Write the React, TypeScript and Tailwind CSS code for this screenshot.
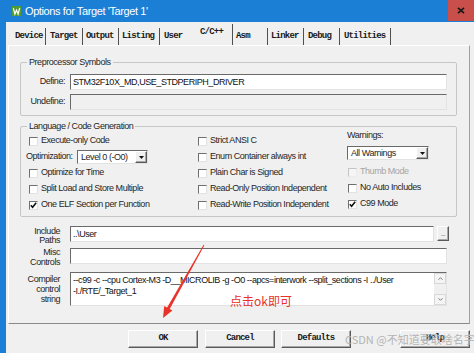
import React from "react";

const sans = "font-['Liberation_Sans',Arial,sans-serif]";
const mono = "font-['Liberation_Mono','Courier_New',monospace] font-bold text-[9px] tracking-[-0.8px] text-[#1a1a1a]";
const sunken =
  "border border-t-[#6a6a6a] border-l-[#6a6a6a] border-r-[#e3e3e3] border-b-[#e3e3e3]";
const raised =
  "border border-t-white border-l-white border-r-[#5a5a5a] border-b-[#5a5a5a] shadow-[inset_-1px_-1px_0_#a8a8a8]";

function Check({ checked = false, disabled = false }: { checked?: boolean; disabled?: boolean }) {
  return (
    <span
      className={`relative inline-block w-[9px] h-[9px] shrink-0 border ${
        disabled
          ? "border-t-[#c4c4c4] border-l-[#c4c4c4] border-r-[#ececec] border-b-[#ececec] bg-[#f5f5f5]"
          : "border-t-[#6f6f6f] border-l-[#6f6f6f] border-r-[#e2e2e2] border-b-[#e2e2e2] bg-white"
      }`}
    >
      {checked && (
        <svg className="absolute left-0 top-0" width="7" height="7" viewBox="0 0 7 7">
          <path d="M0.8 3.2 L2.6 5.2 L6.2 0.8" stroke="#111" strokeWidth="1.6" fill="none" />
        </svg>
      )}
    </span>
  );
}

function CbRow({ label, checked, disabled }: { label: string; checked?: boolean; disabled?: boolean }) {
  return (
    <div className="h-[16px] flex items-center">
      <Check checked={checked} disabled={disabled} />
      <span className={`ml-[3px] whitespace-nowrap ${disabled ? "text-[#a5a5a5]" : ""}`}>{label}</span>
    </div>
  );
}

function Select({ value, w }: { value: string; w: string }) {
  return (
    <div className={`flex items-stretch h-[14px] bg-white ${sunken} ${w}`}>
      <span className="flex-1 pl-[3px] leading-[12px] whitespace-nowrap">{value}</span>
      <span className={`w-[12px] flex items-center justify-center bg-[#f0f0f0] ${raised}`}>
        <svg width="5" height="3" viewBox="0 0 5 3">
          <path d="M0 0 H5 L2.5 3 Z" fill="#111" />
        </svg>
      </span>
    </div>
  );
}

function Tab({ label, w, pl, sep = true, sel = false }: { label: string; w: string; pl: string; sep?: boolean; sel?: boolean }) {
  return (
    <div
      className={`${w} ${pl} ${mono} flex items-center ${sel ? "h-[21px] pb-[3px]" : "h-[17px]"} ${
        sep ? "border-r border-r-[#505050]" : ""
      } whitespace-nowrap`}
    >
      {label}
    </div>
  );
}

function Btn({ label, cls }: { label: string; cls: string }) {
  return (
    <div className={`${cls} w-[70px] h-[18px] bg-[#f0f0f0] ${raised} flex items-center justify-center ${mono}`}>
      {label}
    </div>
  );
}

export default function App() {
  return (
    <div className={`relative w-[474px] h-[353px] overflow-hidden bg-[#f0f0f0] text-[9px] tracking-[-0.45px] text-[#262626] ${sans}`}>
      {/* Title bar */}
      <div className="h-[22px] bg-[#1b7fd5] flex items-center">
        <svg className="ml-[12px]" width="9" height="10" viewBox="0 0 9 10">
          <rect width="9" height="10" fill="#4f9a32" />
          <path d="M1.3 2 L2.9 8 L4.5 4 L6.1 8 L7.7 2" stroke="#fff" strokeWidth="1.2" fill="none" />
        </svg>
        <span className={`ml-[4px] text-white text-[11px] tracking-[-0.4px] ${sans}`}>Options for Target 'Target 1'</span>
        <div className="ml-auto self-start w-[26px] h-[21px] bg-[#c9504a] flex items-center justify-center">
          <svg width="8" height="7" viewBox="0 0 8 7">
            <path d="M1 0.8 L7 6.2 M7 0.8 L1 6.2" stroke="#1a1a1a" strokeWidth="1.8" />
          </svg>
        </div>
      </div>

      <div className="flex h-[331px]">
        <div className="w-[6px] bg-[#1b7fd5]" />
        <div className="flex-1 pl-[2px] flex flex-col">
          {/* Tabs */}
          <div className="h-[23px] flex items-end pl-[2px]">
            <Tab label="Device" w="w-[36px]" pl="pl-[5px]" />
            <Tab label="Target" w="w-[37px]" pl="pl-[4px]" />
            <Tab label="Output" w="w-[36px]" pl="pl-[3px]" />
            <Tab label="Listing" w="w-[41px]" pl="pl-[3px]" />
            <Tab label="User" w="w-[37px]" pl="pl-[4px]" sep={false} />
            <Tab label="C/C++" w="w-[36px]" pl="pl-[3px]" sel />
            <Tab label="Asm" w="w-[35px]" pl="pl-[3px]" />
            <Tab label="Linker" w="w-[36px]" pl="pl-[3px]" />
            <Tab label="Debug" w="w-[36px]" pl="pl-[4px]" />
            <Tab label="Utilities" w="w-[51px]" pl="pl-[4px]" />
          </div>

          {/* Panel */}
          <div className="w-[462px] h-[279px] border border-t-white border-l-white border-r-[#a0a0a0] border-b-[#8a8a8a] pl-[11px] pr-[12px] flex flex-col">
            {/* Preprocessor Symbols */}
            <fieldset className="mt-[10px] border border-[#c6c6c6] rounded-[2px] pt-[6px] pb-[5px] pr-[9px]">
              <legend className="ml-[6px] px-[2px] leading-[12px]">Preprocessor Symbols</legend>
              <div className="flex items-center h-[16px]">
                <span className="w-[44px] text-right">Define:</span>
                <div className={`ml-[5px] flex-1 h-[16px] bg-white ${sunken} pl-[2px] leading-[14px] text-[#111]`}>
                  STM32F10X_MD,USE_STDPERIPH_DRIVER
                </div>
              </div>
              <div className="flex items-center h-[16px] mt-[4px]">
                <span className="w-[44px] text-right">Undefine:</span>
                <div className={`ml-[5px] flex-1 h-[16px] bg-[#f0f0f0] ${sunken}`} />
              </div>
            </fieldset>

            {/* Language / Code Generation */}
            <fieldset className="mt-[4px] border border-[#c6c6c6] rounded-[2px] pt-[1px] pb-[3px]">
              <legend className="ml-[6px] px-[2px] leading-[12px]">Language / Code Generation</legend>
              <div className="flex">
                <div className="w-[177px] pl-[5px] flex flex-col">
                  <div className="ml-[3px]">
                    <CbRow label="Execute-only Code" />
                  </div>
                  <div className="h-[16px] flex items-center">
                    <span className="w-[51px] whitespace-nowrap">Optimization:</span>
                    <Select value="Level 0 (-O0)" w="w-[71px]" />
                  </div>
                  <div className="ml-[3px]">
                    <CbRow label="Optimize for Time" />
                    <CbRow label="Split Load and Store Multiple" />
                    <CbRow label="One ELF Section per Function" checked />
                  </div>
                </div>
                <div className="w-[149px] flex flex-col">
                  <CbRow label="Strict ANSI C" />
                  <CbRow label="Enum Container always int" />
                  <CbRow label="Plain Char is Signed" />
                  <CbRow label="Read-Only Position Independent" />
                  <CbRow label="Read-Write Position Independent" />
                </div>
                <div className="flex-1 flex flex-col -mt-[3px]">
                  <div className="h-[10px] leading-[10px]">Warnings:</div>
                  <div className="mt-[6px]">
                    <Select value="All Warnings" w="w-[82px]" />
                  </div>
                  <div className="mt-[4px] ml-[1px]">
                    <CbRow label="Thumb Mode" disabled />
                    <CbRow label="No Auto Includes" />
                    <CbRow label="C99 Mode" checked />
                  </div>
                </div>
              </div>
            </fieldset>

            {/* Include paths */}
            <div className="mt-[9px] flex items-start h-[16px]">
              <div className="w-[40px] text-right leading-[9px] mt-[1px]">
                <div>Include</div>
                <div>Paths</div>
              </div>
              <div className={`ml-[10px] w-[364px] h-[16px] bg-white ${sunken} pl-[2px] leading-[14px] text-[#111]`}>..\User</div>
              <div className={`ml-[3px] w-[12px] h-[15px] bg-[#f0f0f0] ${raised} flex items-center justify-center text-[7px] text-[#666] leading-none`}>
                ...
              </div>
            </div>

            <div className="mt-[6px] flex items-start h-[16px]">
              <div className="w-[40px] text-right leading-[10px] -mt-[1px]">
                <div>Misc</div>
                <div>Controls</div>
              </div>
              <div className={`ml-[10px] w-[377px] h-[16px] bg-white ${sunken}`} />
            </div>

            <div className="mt-[8px] flex items-start">
              <div className="w-[40px] text-right leading-[10px] mt-[2px]">
                <div>Compiler</div>
                <div>control</div>
                <div>string</div>
              </div>
              <div className={`ml-[10px] w-[377px] h-[34px] bg-white ${sunken} flex`}>
                <div className="flex-1 pl-[2px] pt-[2px] leading-[11px] text-[#111] whitespace-nowrap overflow-hidden">
                  <div>--c99 -c --cpu Cortex-M3 -D__MICROLIB -g -O0 --apcs=interwork --split_sections -I ../User</div>
                  <div>-I./RTE/_Target_1</div>
                </div>
                <div className="w-[12px] bg-[#f0f0f0] flex flex-col justify-between">
                  <div className="h-[11px] border border-[#d8d8d8] bg-[#f4f4f4] flex items-center justify-center">
                    <svg width="5" height="3" viewBox="0 0 5 3">
                      <path d="M0.5 2.7 L2.5 0.7 L4.5 2.7" stroke="#7a7a7a" strokeWidth="1" fill="none" />
                    </svg>
                  </div>
                  <div className="h-[11px] border border-[#d8d8d8] bg-[#f4f4f4] flex items-center justify-center">
                    <svg width="5" height="3" viewBox="0 0 5 3">
                      <path d="M0.5 0.3 L2.5 2.3 L4.5 0.3" stroke="#7a7a7a" strokeWidth="1" fill="none" />
                    </svg>
                  </div>
                </div>
              </div>
            </div>
          </div>

          {/* Buttons */}
          <div className="flex pt-[6px]">
            <Btn label="OK" cls="ml-[120px]" />
            <Btn label="Cancel" cls="ml-[7px]" />
            <Btn label="Defaults" cls="ml-[6px]" />
            <Btn label="Help" cls="ml-[49px]" />
          </div>
        </div>
      </div>

      {/* Red annotation arrow */}
      <svg className="absolute left-0 top-0 pointer-events-none" width="474" height="353" viewBox="0 0 474 353">
        <polygon points="204.4,245.2 203.6,244.8 166.7,308.3 169.3,309.7" fill="#e8322a" />
        <polygon points="163,318 172.4,310.6 164.2,306" fill="#e8322a" />
      </svg>
      <div className="absolute left-[230px] top-[294px] text-[12px] leading-[14px] tracking-normal text-[#e8322a] font-['Noto_Sans_CJK_SC','Noto_Sans',sans-serif]">
        点击ok即可
      </div>

      {/* Watermark */}
      <div className="absolute left-[345px] top-[332px] text-[11px] leading-[14px] tracking-normal text-[#b4b4b4] font-['Noto_Sans_CJK_SC','Noto_Sans',sans-serif] whitespace-nowrap">
        CSDN @不知道要取啥名字
      </div>
    </div>
  );
}
